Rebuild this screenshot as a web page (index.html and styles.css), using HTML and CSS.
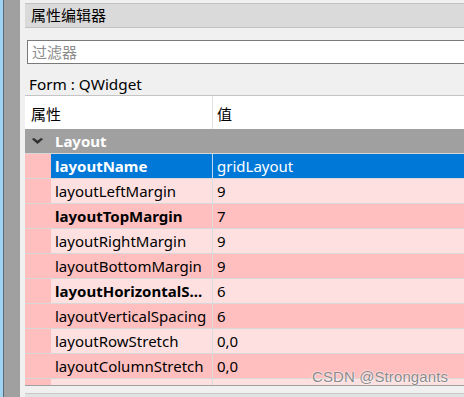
FILE: index.html
```html
<!DOCTYPE html>
<html lang="zh-CN">
<head>
<meta charset="utf-8">
<link rel="stylesheet" href="styles.css">
</head>
<body>
<div class="app">
  <div class="edge"></div>
  <div class="edge-line"></div>
  <div class="gutter"></div>
  <div class="gap"></div>
  <div class="panel">
    <div class="top-space"></div>
    <div class="titlebar">属性编辑器</div>
    <div class="filter-space"></div>
    <div class="filter">过滤器</div>
    <div class="form-label">Form : QWidget</div>
    <div class="header">
      <div class="h-name">属性</div>
      <div class="h-value">值</div>
    </div>
    <div class="group">
      <svg class="chev" width="11" height="6" viewBox="0 0 11 6"><path d="M0.5 0.8 L5.5 5 L10.5 0.8 M1.5 0.5 L5.5 3.6 L9.5 0.5" fill="none" stroke="#303030" stroke-width="1.4"/></svg>
      <span class="group-text">Layout</span>
    </div>
    <div class="rows">
      <div class="row dark selected"><div class="ind"></div><div class="name bold">layoutName</div><div class="value">gridLayout</div></div>
      <div class="row light"><div class="ind"></div><div class="name">layoutLeftMargin</div><div class="value">9</div></div>
      <div class="row dark"><div class="ind"></div><div class="name bold">layoutTopMargin</div><div class="value">7</div></div>
      <div class="row light"><div class="ind"></div><div class="name">layoutRightMargin</div><div class="value">9</div></div>
      <div class="row dark"><div class="ind"></div><div class="name">layoutBottomMargin</div><div class="value">9</div></div>
      <div class="row light"><div class="ind"></div><div class="name bold">layoutHorizontalS...</div><div class="value">6</div></div>
      <div class="row dark"><div class="ind"></div><div class="name">layoutVerticalSpacing</div><div class="value">6</div></div>
      <div class="row light"><div class="ind"></div><div class="name">layoutRowStretch</div><div class="value">0,0</div></div>
      <div class="row dark"><div class="ind"></div><div class="name">layoutColumnStretch</div><div class="value">0,0</div></div>
      <div class="row light partial"><div class="ind"></div><div class="name"></div><div class="value"></div></div>
    </div>
    <div class="bottom-bar"></div>
    <div class="bottom-rest"></div>
  </div>
</div>
<div class="watermark">CSDN @Strongants</div>
</body>
</html>
```

FILE: styles.css
```css
html, body {
  margin: 0;
  padding: 0;
  width: 464px;
  height: 397px;
  overflow: hidden;
  background: #f0f0f0;
  font-family: "Noto Sans", "Noto Sans CJK SC", sans-serif;
  font-size: 15px;
  color: #000;
}
.app {
  display: flex;
  height: 397px;
  position: relative;
}
.edge { width: 3px; background: #9fd3f2; }
.edge-line { width: 1px; background: #5a6a78; }
.gutter { width: 16px; background: #a0a0a0; }
.gap { width: 5px; background: #f0f0f0; }
.panel {
  flex: 1;
  display: flex;
  flex-direction: column;
  min-width: 0;
  background: #f0f0f0;
}
.top-space { height: 3px; }
.titlebar {
  height: 23px;
  border-top: 1px solid #c2c2c2;
  border-bottom: 1px solid #c2c2c2;
  background: #dadada;
  padding-left: 6px;
  font-size: 15px;
  line-height: 23px;
}
.filter-space { height: 12px; }
.filter {
  margin-left: 2px;
  height: 22px;
  border: 1px solid #7a7a7a;
  border-right: none;
  background: #fff;
  color: #8c8c8c;
  font-size: 15px;
  line-height: 22px;
  padding-left: 4px;
}
.form-label {
  height: 32px;
  line-height: 40px;
  padding-left: 4px;
  font-size: 15.3px;
  border-bottom: 1px solid #c4c4c4;
  box-sizing: border-box;
}
.header {
  display: flex;
  height: 33px;
  background: #fff;
  font-size: 15px;
}
.h-name {
  width: 188px;
  border-right: 1px solid #e4e4e4;
  padding-left: 6px;
  box-sizing: border-box;
  line-height: 36px;
}
.h-value {
  padding-left: 4px;
  line-height: 36px;
}
.group {
  display: flex;
  align-items: center;
  height: 24px;
  background: #a0a0a0;
  border-bottom: 1px solid #d6d6d6;
}
.chev { margin-left: 7px; margin-right: 12px; }
.group-text {
  color: #fff;
  font-weight: bold;
  font-size: 15px;
}
.rows { display: flex; flex-direction: column; }
.row {
  display: flex;
  height: 24px;
  border-bottom: 1px solid #d8d8d8;
  line-height: 24px;
}
.row .ind { width: 26px; background: #ffbfbf; flex: none; }
.row .name {
  width: 162px;
  flex: none;
  padding-left: 4px;
  box-sizing: border-box;
  border-right: 1px solid #dcdcdc;
  white-space: nowrap;
  overflow: hidden;
}
.row .value { flex: 1; padding-left: 4px; }
.row.dark .name, .row.dark .value { background: #ffbfbf; }
.row.light .name, .row.light .value { background: #ffe0e0; }
.row.selected .name, .row.selected .value { background: #0078d7; color: #fff; }
.row.selected .name { border-right-color: #bcd7ef; }
.bold { font-weight: bold; }
.row.partial { height: 6px; border-bottom: none; }
.bottom-bar {
  height: 7px;
  border-top: 1px solid #a0a0a0;
  border-bottom: 1px solid #c8c8c8;
  background: #f0f0f0;
}
.bottom-rest { flex: 1; background: #e2e2e2; }
.watermark {
  position: absolute;
  left: 312px;
  top: 368px;
  font-family: "Liberation Sans", sans-serif;
  font-size: 15px;
  color: #8a8a8a;
  text-shadow: 0 0 2px #fff, 0 0 1px #fff;
  letter-spacing: 0.1px;
}
```
